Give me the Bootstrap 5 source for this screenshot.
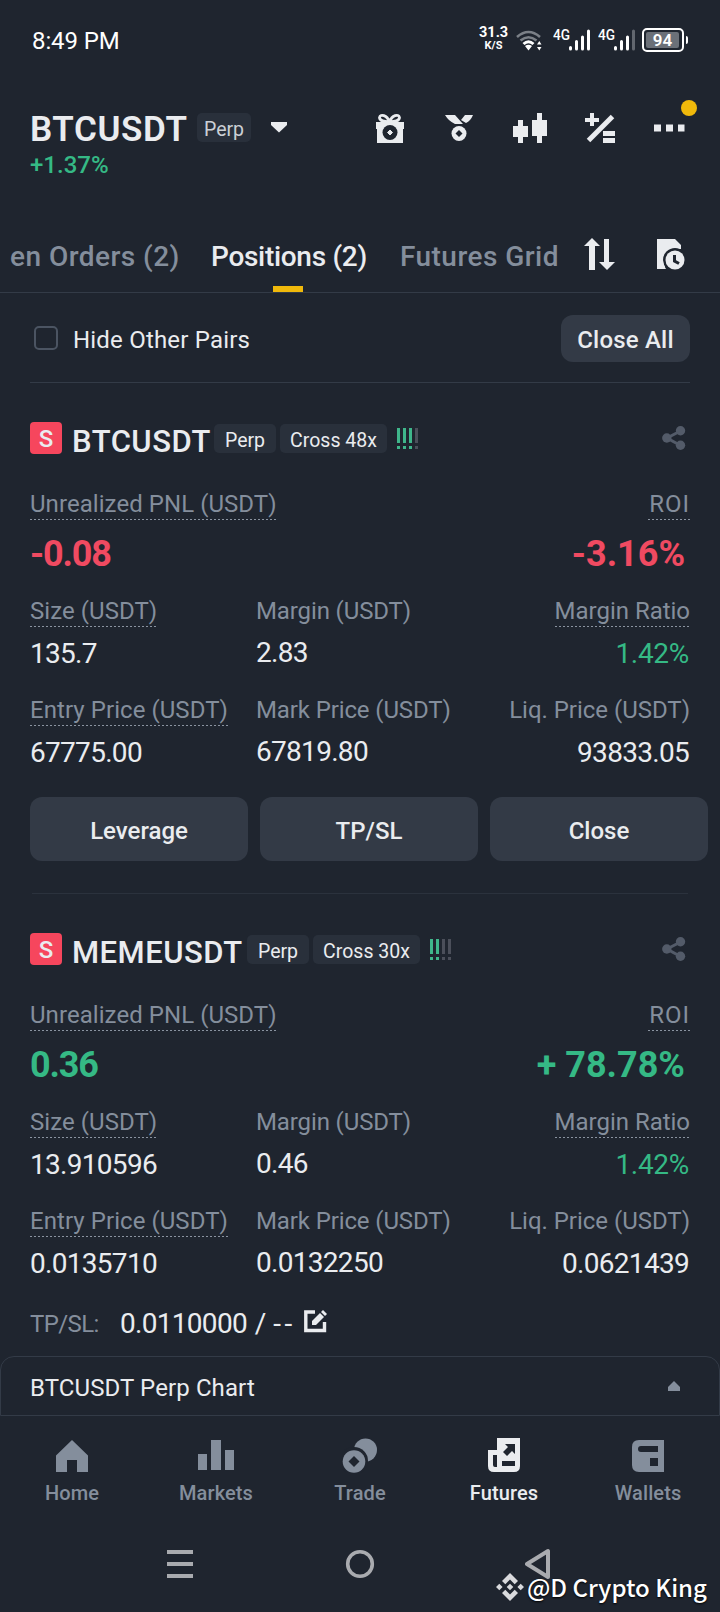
<!DOCTYPE html>
<html lang="en">
<head>
<meta charset="utf-8">
<meta name="viewport" content="width=device-width, initial-scale=1">
<title>Futures positions</title>
<link href="https://cdn.jsdelivr.net/npm/bootstrap@5.3.0/dist/css/bootstrap.min.css" rel="stylesheet">
<style>
:root{--bg:#1f252f;--fg:#eaecef;--dim:#848e9c;--line:#333b47;--btn:#333a46;--tag:#29303b;--up:#35b985;--down:#f04a61;--gold:#f0b90b}
html,body{margin:0;height:1612px;overflow:hidden}
body{background:var(--bg);color:var(--fg);font-family:Roboto,"Liberation Sans",sans-serif;font-size:24px;line-height:30px}
svg{display:block;flex:none}
.app{width:720px;height:1612px}
.up{color:var(--up)}.down{color:var(--down)}.dim{color:var(--dim)}
.status{height:80px;padding:24px 31px 0 32px;color:#fff}
.clock{padding-top:2px;letter-spacing:-.1px}
.rate{width:29px;padding-top:1px;margin-right:8px;font-size:14.5px;line-height:15px;font-weight:700;text-align:center}
.rate small{display:block;font-size:11px;line-height:12px;font-weight:700}
.headbar{height:140px;padding:28px 0 0 30px}
.pair{font-size:35px;line-height:43px;font-weight:600;letter-spacing:.6px;width:167px;height:40px}
.tag{background:var(--tag);border-radius:5px;height:29px;line-height:33px;font-size:19.5px;text-align:center;flex:none}
.chg{font-weight:500;margin-top:2px}
.tools{height:40px;margin-left:88px}
.more{position:relative}
.dot{position:absolute;left:27px;top:-24px;width:16px;height:16px;border-radius:50%;background:var(--gold)}
.tabs{height:73px;border-bottom:1px solid var(--line);font-size:28px;line-height:36px;font-weight:500;padding-left:10px;letter-spacing:.45px}
.tabs span{white-space:nowrap;padding-top:19px}
.tabs .on{position:relative;height:72px;width:189px;letter-spacing:-.3px;color:var(--fg)}
.on i{position:absolute;left:62px;bottom:0;width:30px;height:6px;background:var(--gold)}
.filter{height:90px;margin:0 30px;border-bottom:1px solid var(--line);letter-spacing:.2px}
.box{width:24px;height:24px;border:2px solid #4b5462;border-radius:5px;margin:33px 0 0 4px}
.pill{background:var(--btn);border-radius:12px;color:var(--fg);font-weight:500;text-align:center}
.positions{height:973px;overflow:hidden}
.pos{height:511px;padding:39px 30px 0}
.side{width:32px;height:32px;border-radius:4px;background:#f6465d;font-size:24px;line-height:34px;font-weight:500;text-align:center;flex:none}
.sym{font-size:31px;line-height:36px;font-weight:500;margin:2px 0 0 10px;letter-spacing:.5px}
.cols{display:grid;grid-template-columns:226px 1fr auto}
.lab{height:31px;line-height:30px;color:var(--dim);white-space:nowrap;display:inline-block;letter-spacing:.06px}
.cols>div:nth-child(2) .lab{letter-spacing:-.12px}
.cols>div:nth-child(3) .lab{letter-spacing:-.02px}
.roi{letter-spacing:1px;padding-left:1px}
.dots{background:repeating-linear-gradient(90deg,#8a93a0 0 2px,transparent 2px 4px) left bottom/100% 1px no-repeat}
.big{font-size:36px;line-height:40px;font-weight:700;margin-top:14px;letter-spacing:-1.2px}
.text-end .big{margin-right:5px;letter-spacing:0}
.val{font-size:28px;line-height:36px;letter-spacing:-.7px;margin-top:9px}
.cols>div:nth-child(2) .val{margin-top:8px}
.cols>div:nth-child(3) .val{padding-right:1px}
.cols .val.up{letter-spacing:-.3px}
.slash{word-spacing:1.5px}
.dashes{letter-spacing:3.500px;font-variant-ligatures:none}
.acts{gap:12px;margin-top:26px;width:678px}
.acts .pill{height:64px;line-height:68px;width:218px}
.rule{height:1px;margin:32px 2px 0;background:#2b323d}
.panel{height:60px;border:1px solid var(--line);border-radius:14px 14px 0 0;padding:16px 39px 0 29px;letter-spacing:.1px}
.menu{height:100px;font-size:20px;line-height:24px;font-weight:500;color:var(--dim)}
.menu div{width:144px;letter-spacing:.1px}
.menu svg{margin:21px auto 8px}
.sys{height:96px;position:relative}
.keys{padding:32px 167px 0 166px}
.mark-by{position:absolute;left:496px;top:57px;color:#fff;font:500 24px/28px "Noto Sans CJK SC",sans-serif;text-shadow:0 1px 2px #000}
</style>
</head>
<body>
<svg width="0" height="0" class="position-absolute">
<symbol id="share" viewBox="0 0 24 24"><path d="M18.500 5 5 12l13.500 7.500" fill="none" stroke="currentColor" stroke-width="3"/><g fill="currentColor"><circle cx="18.500" cy="4.800" r="4.700"/><circle cx="4.800" cy="12" r="4.700"/><circle cx="18.500" cy="19.300" r="4.700"/></g></symbol>
</svg>
<div class="app d-flex flex-column">
  <div class="status d-flex">
    <span class="clock me-auto">8:49 PM</span>
    <div class="rate">31.3<small>K/S</small></div>
    <svg width="27" height="24" viewBox="0 0 27 24" style="margin:5px 10px 0 0"><g fill="none" stroke-width="2.600"><path d="M1 8Q12.500-2 24 8M4.500 11.500Q12.500 5 20.500 11.500" stroke="#7b8087"/><path d="M7.500 15Q12.500 10.500 17.500 15" stroke="#fff" stroke-width="3"/></g><path d="M9 17q3.500-2.500 7 0l-3.500 4.500zM21 15.500l2.300-3.500 2.200 3.500zm0 2.500 2.300 3.500 2.200-3.500z" fill="#fff"/></svg>
    <svg width="38" height="26" viewBox="0 0 38 26" style="margin:3px 7px 0 0"><text x="0" y="13" font-size="14.500" font-weight="500" fill="#fff" textLength="17" lengthAdjust="spacingAndGlyphs">4G</text><path d="M17.500 20.500v1.500M23.500 14.500V22M29.500 10V22M35.500 4V22" stroke="#fff" stroke-width="3" stroke-linecap="round"/></svg>
    <svg width="38" height="26" viewBox="0 0 38 26" style="margin:3px 6px 0 0"><text x="0" y="13" font-size="14.500" font-weight="500" fill="#fff" textLength="17" lengthAdjust="spacingAndGlyphs">4G</text><path d="M17.500 20.500v1.500M23.500 14.500V22M29.500 10V22" stroke="#fff" stroke-width="3" stroke-linecap="round"/><path d="M35.500 4V22" stroke="#62676f" stroke-width="3" stroke-linecap="round"/></svg>
    <svg width="47" height="24" viewBox="0 0 47 24" style="margin-top:4px"><rect x="1" y="1" width="40" height="22" rx="4" fill="none" stroke="#fff" stroke-width="2"/><rect x="4" y="4" width="33" height="16" rx="2" fill="#6b7078"/><path d="M44 8q2 0 2 2v4q0 2-2 2z" fill="#fff"/><text x="20.500" y="18" text-anchor="middle" font-size="17" font-weight="600" fill="#fff">94</text></svg>
  </div>
  <div class="headbar d-flex">
    <div>
      <div class="d-flex">
        <span class="pair">BTCUSDT</span><span class="tag" style="width:54px;margin-top:5px;color:#ccd0d6">Perp</span>
        <svg width="16" height="12" viewBox="0 0 16 12" style="margin:13px 0 0 20px"><path d="M0 1h16v3l-8 7.500L0 4z" fill="#eaecef"/></svg>
      </div>
      <div class="chg up">+1.37%</div>
    </div>
    <div class="tools d-flex align-items-center">
      <svg width="30" height="31" viewBox="0 0 30 31" style="margin-right:39px"><path d="M14.500 9C12 2 5.500.500 4.500 4.500 4.500 8 9 8.500 14.500 9 20 8.500 24.500 8 24.500 4.500 23.500.500 17 2 14.500 9z" fill="none" stroke="#eaecef" stroke-width="2.800"/><path d="M1 9h28v7h-1v14H2V16H1z" fill="#eaecef"/><circle cx="15" cy="19.500" r="7.500" fill="#1f252f"/><path d="M15 17l2.500 2.500L15 22l-2.500-2.500z" fill="#eaecef" stroke="#eaecef" stroke-linejoin="round"/></svg>
      <svg width="30" height="31" viewBox="0 0 30 31" style="margin-right:38px"><path d="M1 2h10l8 9h-8Q4.500 8 1 2zM17 7l4-5h8q-2.500 6-7 8z" fill="#eaecef"/><circle cx="15" cy="20.500" r="7.500" fill="#eaecef"/><path d="M15 17l3.500 3.500L15 24l-3.500-3.500z" fill="#1f252f"/></svg>
      <svg width="36" height="31" viewBox="0 0 36 31" style="margin-right:36px"><path d="M1 13h5V7h5v6h5v11h-5v6H6v-6H1zM20 7h5V0h5v7h5v16h-5v7h-5v-7h-5z" fill="#eaecef"/></svg>
      <svg width="32" height="31" viewBox="0 0 32 31" style="margin-right:38px"><path d="M4.500 27.500 28.500 3.500" stroke="#eaecef" stroke-width="5"/><path d="M6 0h4v5h5v4h-5v4H6V9H1V5h5zM19 18h12v5H19zm0 7h12v5H19z" fill="#eaecef"/></svg>
      <div class="more"><svg width="31" height="8" viewBox="0 0 31 8"><path d="M0 .500h7v7H0zm12 0h7v7h-7zm12 0h6.500v7H24z" fill="#eaecef"/></svg><i class="dot"></i></div>
    </div>
  </div>
  <div class="tabs d-flex dim">
    <span style="width:201px">en Orders (2)</span>
    <span class="on">Positions (2)<i></i></span>
    <span style="width:184px">Futures Grid</span>
    <svg width="31" height="32" viewBox="0 0 31 32" style="margin:18px 42px 0 0"><path d="M8 0l8 8h-5v24H5V8H0zM20 1h5v23h6l-8 8-8-8h5z" fill="#eaecef"/></svg>
    <svg width="28" height="32" viewBox="0 0 28 32" style="margin-top:18px"><path d="M0 1h18l6 6v4H15L8 19v12H0z" fill="#eaecef"/><circle cx="18" cy="22" r="12" fill="#1f252f"/><path d="M0 18h6q-.5 8 3 13H0z" fill="#eaecef"/><circle cx="18" cy="22" r="9.500" fill="#eaecef"/><path d="M17.500 17v6l4.500 2.500" fill="none" stroke="#1f252f" stroke-width="3"/></svg>
  </div>
  <div class="filter d-flex">
    <div class="box"></div>
    <span class="me-auto" style="margin:32px 0 0 15px">Hide Other Pairs</span>
    <div class="pill" style="width:129px;height:47px;line-height:51px;margin-top:22px">Close All</div>
  </div>
  <div class="positions">
    <div class="pos">
      <div class="d-flex" style="height:32px">
        <div class="side">S</div><div class="sym" style="width:142px">BTCUSDT</div>
        <div class="tag" style="width:62px;margin:2px 4px 0 0">Perp</div><div class="tag" style="width:107px;margin-top:2px">Cross 48x</div>
        <svg class="me-auto" width="21" height="21" viewBox="0 0 21 21" style="margin:6px 0 0 10px"><path d="M1.500 0v15M7.500 0v15M13.500 0v15M1.500 18v3M7.500 18v3M13.500 18v3" stroke="#3fb68b" stroke-width="3"/><path d="M19.500 0v15M19.500 18v3" stroke="#4b4f5a" stroke-width="3"/></svg>
        <svg width="24" height="24" style="margin:4px 4px 0 0;color:#535b69"><use href="#share"/></svg>
      </div>
      <div class="d-flex justify-content-between" style="margin-top:35px">
        <div><span class="lab dots d-block">Unrealized PNL (USDT)</span><div class="big down">-0.08</div></div>
        <div class="text-end"><span class="lab dots roi">ROI</span><div class="big down">-3.16%</div></div>
      </div>
      <div class="cols" style="margin-top:22px">
        <div><span class="lab dots">Size (USDT)</span><div class="val">135.7</div></div>
        <div><span class="lab">Margin (USDT)</span><div class="val">2.83</div></div>
        <div class="text-end"><span class="lab dots">Margin Ratio</span><div class="val up">1.42%</div></div>
      </div>
      <div class="cols" style="margin-top:23px">
        <div><span class="lab dots">Entry Price (USDT)</span><div class="val">67775.00</div></div>
        <div><span class="lab">Mark Price (USDT)</span><div class="val">67819.80</div></div>
        <div class="text-end"><span class="lab">Liq. Price (USDT)</span><div class="val">93833.05</div></div>
      </div>
      <div class="acts d-flex"><div class="pill">Leverage</div><div class="pill">TP/SL</div><div class="pill">Close</div></div>
      <div class="rule"></div>
    </div>
    <div class="pos">
      <div class="d-flex" style="height:32px">
        <div class="side">S</div><div class="sym" style="width:175px">MEMEUSDT</div>
        <div class="tag" style="width:62px;margin:2px 4px 0 0">Perp</div><div class="tag" style="width:107px;margin-top:2px">Cross 30x</div>
        <svg class="me-auto" width="21" height="21" viewBox="0 0 21 21" style="margin:6px 0 0 10px"><path d="M1.500 0v15M7.500 0v15M1.500 18v3M7.500 18v3" stroke="#3fb68b" stroke-width="3"/><path d="M13.500 0v15M13.500 18v3M19.500 0v15M19.500 18v3" stroke="#4b4f5a" stroke-width="3"/></svg>
        <svg width="24" height="24" style="margin:4px 4px 0 0;color:#535b69"><use href="#share"/></svg>
      </div>
      <div class="d-flex justify-content-between" style="margin-top:35px">
        <div><span class="lab dots d-block">Unrealized PNL (USDT)</span><div class="big up">0.36</div></div>
        <div class="text-end"><span class="lab dots roi">ROI</span><div class="big up">+ 78.78%</div></div>
      </div>
      <div class="cols" style="margin-top:22px">
        <div><span class="lab dots">Size (USDT)</span><div class="val">13.910596</div></div>
        <div><span class="lab">Margin (USDT)</span><div class="val">0.46</div></div>
        <div class="text-end"><span class="lab dots">Margin Ratio</span><div class="val up">1.42%</div></div>
      </div>
      <div class="cols" style="margin-top:23px">
        <div><span class="lab dots">Entry Price (USDT)</span><div class="val">0.0135710</div></div>
        <div><span class="lab">Mark Price (USDT)</span><div class="val">0.0132250</div></div>
        <div class="text-end"><span class="lab">Liq. Price (USDT)</span><div class="val">0.0621439</div></div>
      </div>
      <div class="d-flex" style="margin-top:24px">
        <span class="dim" style="width:90px;padding-top:3px;letter-spacing:-.6px">TP/SL:</span><span class="val text-nowrap" style="width:184px;margin-top:0">0.0110000<span class="slash"> / </span><span class="dashes">--</span></span>
        <svg width="23" height="23" viewBox="0 0 23 23" style="margin-top:4px"><path d="M11 2H1.800v18.500h18.700V12" fill="none" stroke="#eaecef" stroke-width="3.400"/><path d="M8 11l8-8 4 4-8 8H8zM17 2l2-2 4 4-2 2z" fill="#eaecef"/></svg>
      </div>
    </div>
  </div>
  <div class="panel d-flex justify-content-between"><span>BTCUSDT Perp Chart</span><svg width="12" height="10" viewBox="0 0 12 10" style="margin-top:8px"><path d="M6 0l6 6v4H0V6z" fill="#848e9c"/></svg></div>
  <div class="menu d-flex text-center">
    <div><svg width="36" height="36" viewBox="0 0 36 36"><path d="M2 18.500 18 3l16 15.500V35H23V23H13v12H2z" fill="currentColor"/></svg>Home</div>
    <div><svg width="36" height="36" viewBox="0 0 36 36"><path d="M0 17h9v16H0zM13 3h10v30H13zm14 10h9v20h-9z" fill="currentColor"/></svg>Markets</div>
    <div><svg width="36" height="36" viewBox="0 0 36 36"><circle cx="23.500" cy="13" r="11.500" fill="currentColor"/><circle cx="12" cy="24" r="14" fill="#1f252f"/><circle cx="12" cy="24.500" r="11.300" fill="currentColor"/><path d="M12 19l5.500 5.500L12 30l-5.500-5.500z" fill="#1f252f"/></svg>Trade</div>
    <div style="color:#eaecef"><svg width="36" height="36" viewBox="0 0 36 36"><path d="M2 13h9V1h23v28q0 6-6 6H8q-6 0-6-6z" fill="currentColor"/><path d="M7 18h4v12H9q-2 0-2-2zM16 24h13v5H16zM19 7h10v10l-3-3-5 5-4-4 5-5z" fill="#1f252f"/></svg>Futures</div>
    <div><svg width="36" height="36" viewBox="0 0 36 36"><path d="M9 3h25v32H9q-7 0-7-7V10q0-7 7-7z" fill="currentColor"/><path d="M28 9v6H11q-3 0-3-3t3-3zM20 21h8v8h-8z" fill="#1f252f"/></svg>Wallets</div>
  </div>
  <div class="sys">
    <div class="keys d-flex justify-content-between">
      <svg width="28" height="32" viewBox="0 0 28 32"><path d="M1 4h26M1 16h26M1 28h26" stroke="#a9abaf" stroke-width="4"/></svg>
      <svg width="32" height="32" viewBox="0 0 32 32"><circle cx="16" cy="16" r="12.300" fill="none" stroke="#a9abaf" stroke-width="3.600"/></svg>
      <svg width="28" height="32" viewBox="0 0 28 32"><path d="M2 16 23 3v26z" fill="none" stroke="#a9abaf" stroke-width="4" stroke-linejoin="round"/></svg>
    </div>
    <div class="mark-by d-flex"><svg width="28" height="28" viewBox="0 0 28 28" style="margin-right:3px"><g fill="#d9dadd"><path d="M14 0l8 8-3.300 3.300L14 6.600l-4.700 4.700L6 8zM14 28l8-8-3.300-3.300-4.700 4.700-4.700-4.700L6 20zM14 10.700l3.300 3.300-3.300 3.300-3.300-3.300zM3.300 10.700 6.600 14l-3.300 3.300L0 14zM24.700 10.700 28 14l-3.300 3.300-3.300-3.300z"/></g></svg><span>@D Crypto King</span></div>
  </div>
</div>
<script src="https://cdn.jsdelivr.net/npm/bootstrap@5.3.0/dist/js/bootstrap.bundle.min.js"></script>
</body>
</html>
